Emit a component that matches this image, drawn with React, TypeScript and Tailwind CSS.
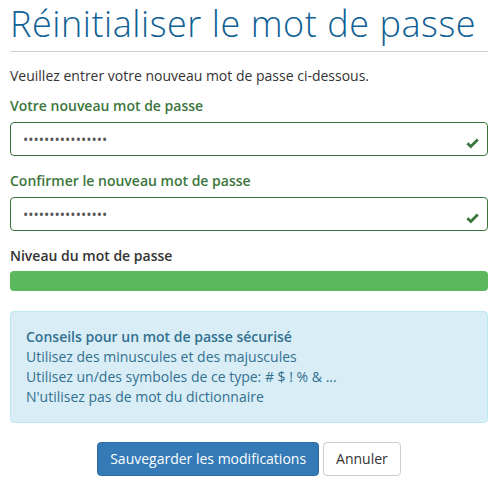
import { useState } from 'react';

function CheckIcon() {
  return (
    <svg
      viewBox="0 0 16 16"
      className="absolute right-[8px] top-1/2 h-[15px] w-[15px] -translate-y-[calc(50%-4px)]"
      aria-hidden="true"
    >
      <path d="M1.5 9.2 L3.6 7.1 L6.2 9.7 L12.6 3.3 L14.7 5.4 L6.2 13.9 Z" fill="#3c763d" />
    </svg>
  );
}

function PasswordField({ id, label, value }: { id: string; label: string; value: string }) {
  return (
    <div className="mb-[15px]">
      <label htmlFor={id} className="mb-[6px] block font-semibold leading-[20px] text-[#3c763d]">
        {label}
      </label>
      <div className="relative">
        <input
          id={id}
          type="password"
          readOnly
          value={value}
          className="block h-[34px] w-full rounded-[4px] border border-[#3c763d] bg-white px-[12px] pr-[42px] text-[14px] text-[#555] outline-none"
        />
        <CheckIcon />
      </div>
    </div>
  );
}

export default function App() {
  const [password] = useState('motdepasse12345');

  return (
    <div className="min-h-screen bg-white px-[10px] font-['Open_Sans','Liberation_Sans',sans-serif] text-[14px] text-[#333]">
      <h1 className="border-b border-[#cfcfcf] pb-[8px] pt-[5px] font-['Open_Sans',sans-serif] text-[36px] font-light leading-[38px] tracking-[0.55px] text-[#0f5f95]">
        Réinitialiser le mot de passe
      </h1>

      <p className="mb-[10px] mt-[14px] leading-[20px]">
        Veuillez entrer votre nouveau mot de passe ci-dessous.
      </p>

      <PasswordField id="new-password" label="Votre nouveau mot de passe" value={password + '1'} />
      <PasswordField id="confirm-password" label="Confirmer le nouveau mot de passe" value={password + '1'} />

      {/* Strength meter */}
      <div className="mb-[5px] font-semibold leading-[20px]">Niveau du mot de passe</div>
      <div className="mb-[20px] h-[20px] overflow-hidden rounded-[4px] bg-[#f5f5f5]">
        <div className="h-full bg-[#5cb85c]" style={{ width: '100%' }} />
      </div>

      <div className="mb-[19px] rounded-[4px] border border-[#bce8f1] bg-[#d9edf7] px-[15px] py-[15px] leading-[20px] text-[#31708f]">
        <div className="font-semibold">Conseils pour un mot de passe sécurisé</div>
        <div>Utilisez des minuscules et des majuscules</div>
        <div>Utilisez un/des symboles de ce type: # $ ! % &amp; ...</div>
        <div>N'utilisez pas de mot du dictionnaire</div>
      </div>

      <div className="flex justify-center gap-[4px]">
        <button
          type="button"
          className="h-[34px] rounded-[4px] border border-[#2e6da4] bg-[#337ab7] px-[12px] leading-[20px] text-white"
        >
          Sauvegarder les modifications
        </button>
        <button
          type="button"
          className="h-[34px] rounded-[4px] border border-[#ccc] bg-white px-[12px] leading-[20px] text-[#333]"
        >
          Annuler
        </button>
      </div>
    </div>
  );
}
